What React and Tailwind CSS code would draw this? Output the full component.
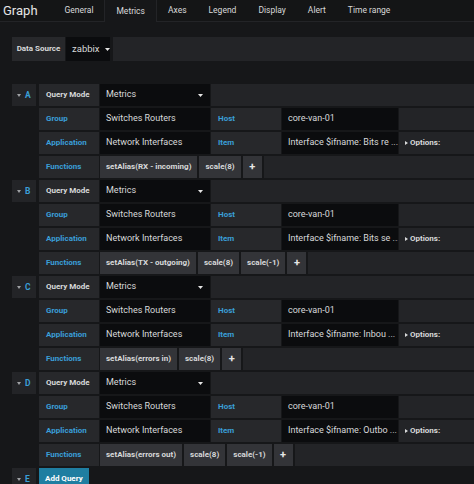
import React from 'react';

const queries = [
  { ref: 'A', item: 'Interface $ifname: Bits re ...', fns: ['setAlias(RX - incoming)', 'scale(8)'] },
  { ref: 'B', item: 'Interface $ifname: Bits se ...', fns: ['setAlias(TX - outgoing)', 'scale(8)', 'scale(-1)'] },
  { ref: 'C', item: 'Interface $ifname: Inbou ...', fns: ['setAlias(errors in)', 'scale(8)'] },
  { ref: 'D', item: 'Interface $ifname: Outbo ...', fns: ['setAlias(errors out)', 'scale(8)', 'scale(-1)'] },
];

const tabs = ['General', 'Metrics', 'Axes', 'Legend', 'Display', 'Alert', 'Time range'];

function Caret() {
  return (
    <svg width="5" height="3" viewBox="0 0 5 3" className="shrink-0">
      <path d="M0 0h5L2.5 3z" fill="#e6e6e6" />
    </svg>
  );
}

function Label({ children, blue, w }) {
  return (
    <div
      className={`${w} h-full flex items-center px-[7px] bg-[#27282b] text-[8px] font-bold whitespace-nowrap shrink-0 ${
        blue ? 'text-[#3a9fd8]' : 'text-[#d8d9da]'
      }`}
    >
      {children}
    </div>
  );
}

function Field({ children, w, caret }) {
  return (
    <div className={`${w} h-full flex items-center justify-between pl-[6px] pr-[7px] bg-[#0b0c0e] text-[9px] text-[#d8d9da] shrink-0 whitespace-nowrap overflow-hidden`}>
      <span>{children}</span>
      {caret && <Caret />}
    </div>
  );
}

function Filler() {
  return <div className="flex-1 h-full bg-[#232427]" />;
}

function Toggle({ letter }) {
  return (
    <div className="w-[24px] h-full bg-[#232427] flex items-center gap-[4px] pl-[5px] mr-[2px] shrink-0">
      <svg width="4" height="3" viewBox="0 0 4 3"><path d="M0 0h4L2 3z" fill="#9fa1a4" /></svg>
      <span className="text-[8.5px] font-bold text-[#3a9fd8]">{letter}</span>
    </div>
  );
}

function Query({ q }) {
  return (
    <div className="flex flex-col gap-[2px] mb-[2px]">
      <div className="flex h-[22px] pl-[12px] gap-[1px]">
        <Toggle letter={q.ref} />
        <Label w="w-[60px]">Query Mode</Label>
        <Field w="w-[110px]" caret>Metrics</Field>
        <Filler />
      </div>
      <div className="flex h-[22px] pl-[39px] gap-[1px]">
        <Label w="w-[60px]" blue>Group</Label>
        <Field w="w-[110px]">Switches Routers</Field>
        <Label w="w-[70px]" blue>Host</Label>
        <Field w="w-[116px]">core-van-01</Field>
        <Filler />
      </div>
      <div className="flex h-[22px] pl-[39px] gap-[1px]">
        <Label w="w-[60px]" blue>Application</Label>
        <Field w="w-[110px]">Network Interfaces</Field>
        <Label w="w-[70px]" blue>Item</Label>
        <Field w="w-[116px]">{q.item}</Field>
        <div className="flex-1 h-full bg-[#232427] flex items-center gap-[2px] pl-[6px] text-[8px] font-bold text-[#d8d9da] whitespace-nowrap">
          <svg width="3" height="4" viewBox="0 0 3 4"><path d="M0 0v4l3-2z" fill="#d8d9da" /></svg>
          Options:
        </div>
      </div>
      <div className="flex h-[22px] pl-[39px] gap-[1px]">
        <Label w="w-[60px]" blue>Functions</Label>
        {q.fns.map((f) => (
          <div key={f} className="h-full flex items-center px-[6px] mr-[1px] bg-[#333438] text-[8px] font-bold text-[#d8d9da] whitespace-nowrap shrink-0">
            {f}
          </div>
        ))}
        <div className="w-[19px] h-full flex items-center justify-center bg-[#333438] text-[11px] font-bold text-[#e6e6e6] mr-[1px] shrink-0">+</div>
        <Filler />
      </div>
    </div>
  );
}

export default function App() {
  return (
    <div className="w-[474px] h-[484px] overflow-hidden bg-[#161719]" style={{ fontFamily: 'Roboto, "Liberation Sans", sans-serif' }}>
      {/* header with tabs */}
      <div className="flex h-[22px] items-stretch bg-[#141516] border-b border-[#232427]">
        <div className="pl-[3px] pr-[16px] text-[13px] leading-[22px] text-[#e6e6e6]">Graph</div>
        <div className="flex">
          {tabs.map((t) => (
            <div
              key={t}
              className={`px-[11px] flex items-center text-[8.5px] whitespace-nowrap text-[#d8d9da] ${
                t === 'Metrics' ? 'bg-[#161719] border-x border-[#232427] -mb-px' : ''
              }`}
            >
              {t}
            </div>
          ))}
        </div>
      </div>

      {/* data source */}
      <div className="flex h-[24px] mt-[15px] pl-[12px] gap-[1px]">
        <div className="w-[53px] h-full flex items-center justify-center bg-[#27282b] text-[8px] font-bold whitespace-nowrap text-[#d8d9da]">Data Source</div>
        <div className="w-[44px] h-full flex items-center gap-[5px] pl-[6px] bg-[#0b0c0e] text-[9.5px] text-[#d8d9da]">
          zabbix <Caret />
        </div>
        <div className="flex-1 h-full bg-[#232427] ml-[2px]" />
      </div>

      <div className="mt-[23px]">
        {queries.map((q) => (
          <Query key={q.ref} q={q} />
        ))}
        <div className="flex h-[22px] pl-[12px] gap-[1px]">
          <Toggle letter="E" />
          <div className="h-full flex items-center px-[6px] bg-[#1f7ea1] text-[8px] font-bold text-white">Add Query</div>
        </div>
      </div>
    </div>
  );
}
